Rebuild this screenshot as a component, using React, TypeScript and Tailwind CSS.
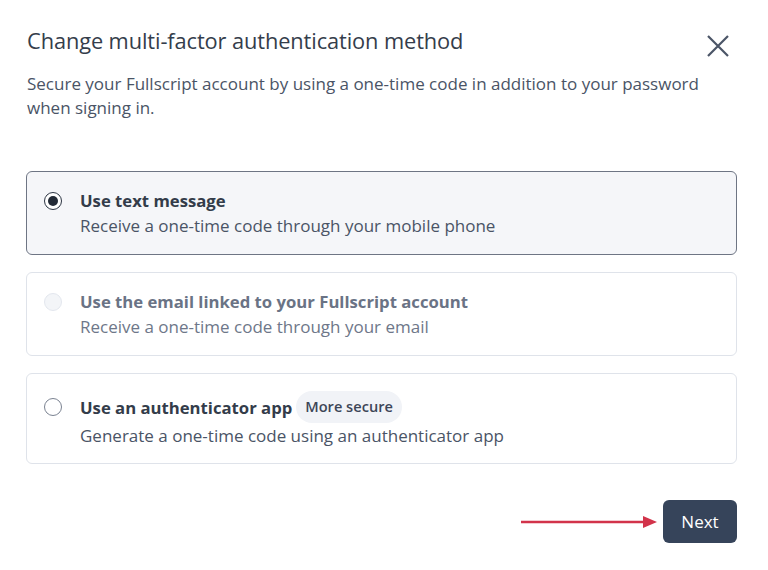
import React, { useState } from 'react';

type Method = {
  id: string;
  title: string;
  detail: string;
  badge?: string;
  disabled?: boolean;
};

const methods: Method[] = [
  { id: 'sms', title: 'Use text message', detail: 'Receive a one-time code through your mobile phone' },
  {
    id: 'email',
    title: 'Use the email linked to your Fullscript account',
    detail: 'Receive a one-time code through your email',
    disabled: true,
  },
  {
    id: 'app',
    title: 'Use an authenticator app',
    detail: 'Generate a one-time code using an authenticator app',
    badge: 'More secure',
  },
];

function Radio({ checked, disabled }: { checked: boolean; disabled?: boolean }) {
  if (disabled) {
    return <span className="h-[18px] w-[18px] shrink-0 rounded-full border border-[#e3e7ee] bg-[#f3f5f8]" />;
  }
  return (
    <span
      className={`flex h-[18px] w-[18px] shrink-0 items-center justify-center rounded-full border-[1.5px] bg-white ${
        checked ? 'border-[#2b3442]' : 'border-[#7a8291]'
      }`}
    >
      {checked && <span className="h-[10px] w-[10px] rounded-full bg-[#222a36]" />}
    </span>
  );
}

export default function App() {
  const [selected, setSelected] = useState('sms');

  return (
    <div className="h-[570px] w-[768px] bg-white font-['Open_Sans',sans-serif] text-[#333c4a]">
      <div className="flex flex-col pl-[26px] pr-[31px] pt-[27px]">
        <div className="flex items-start justify-between">
          <h2 className="pl-px text-[21.8px] leading-[28px] font-normal tracking-[-0.1px] text-[#343d4b]">
            Change multi-factor authentication method
          </h2>
          <button className="mr-[8px] mt-[8px] text-[#4b5567]" aria-label="Close">
            <svg width="22" height="22" viewBox="0 0 22 22" fill="none" stroke="currentColor" strokeWidth="2.2">
              <path d="M1 1L21 21M21 1L1 21" />
            </svg>
          </button>
        </div>
        <p className="mt-[15px] pl-px text-[17px] leading-[24px] text-[#4a5466]">
          Secure your Fullscript account by using a one-time code in addition to your password when signing in.
        </p>

        <div className="mt-[51px] flex flex-col gap-[17px]">
          {methods.map((m) => {
            const checked = selected === m.id;
            return (
              <label
                key={m.id}
                onClick={() => !m.disabled && setSelected(m.id)}
                className={`flex rounded-[6px] border pl-[17px] ${m.badge ? 'pt-[17px] pb-[15px]' : 'py-[16px]'} ${
                  checked ? 'border-[#6e7584] bg-[#f5f6f9]' : 'border-[#dfe3ea] bg-white'
                }`}
              >
                <div className={`flex w-[36px] shrink-0 items-center ${m.badge ? 'h-[32px]' : 'h-[25px]'}`}>
                  <Radio checked={checked} disabled={m.disabled} />
                </div>
                <div className="flex flex-col">
                  <div className="flex items-center gap-[4px]">
                    <span
                      className={`text-[16.7px] leading-[25px] font-bold ${
                        m.disabled ? 'text-[#6a7385]' : 'text-[#333c4a]'
                      }`}
                    >
                      {m.title}
                    </span>
                    {m.badge && (
                      <span className="flex h-[32px] items-center rounded-[16px] bg-[#f1f3f7] px-[9px] text-[14.6px] font-semibold text-[#3d4657]">
                        {m.badge}
                      </span>
                    )}
                  </div>
                  <span
                    className={`text-[17px] leading-[25px] ${m.disabled ? 'text-[#6e7789]' : 'text-[#4a5466]'}`}
                  >
                    {m.detail}
                  </span>
                </div>
              </label>
            );
          })}
        </div>

        <div className="mt-[36px] flex items-center justify-end gap-[6px]">
          <svg width="136" height="12" viewBox="0 0 136 12" className="text-[#d2334a]">
            <path d="M0 6H124" stroke="currentColor" strokeWidth="2.4" />
            <path d="M122 0L136 6L122 12Z" fill="currentColor" />
          </svg>
          <button className="h-[43px] w-[74px] rounded-[6px] bg-[#36445a] text-[17px] text-white">Next</button>
        </div>
      </div>
    </div>
  );
}
